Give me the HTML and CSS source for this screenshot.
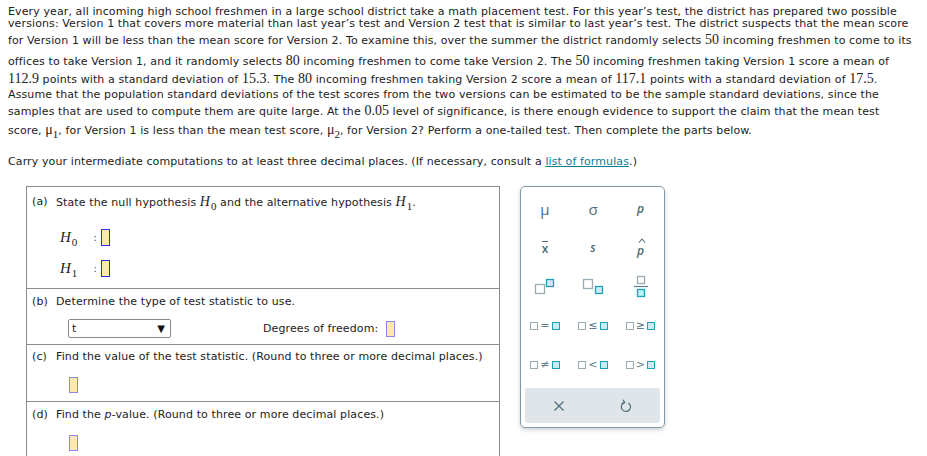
FILE: index.html
```html
<!DOCTYPE html>
<html>
<head>
<meta charset="utf-8">
<link rel="stylesheet" href="styles.css">
</head>
<body>
<div class="intro">
  <div class="ln">Every year, all incoming high school freshmen in a large school district take a math placement test. For this year’s test, the district has prepared two possible</div>
  <div class="ln g0">versions: Version 1 that covers more material than last year’s test and Version 2 test that is similar to last year’s test. The district suspects that the mean score</div>
  <div class="ln g4">for Version 1 will be less than the mean score for Version 2. To examine this, over the summer the district randomly selects <span class="m">50</span> incoming freshmen to come to its</div>
  <div class="ln g9">offices to take Version 1, and it randomly selects <span class="m">80</span> incoming freshmen to come take Version 2. The <span class="m">50</span> incoming freshmen taking Version 1 score a mean of</div>
  <div class="ln g6"><span class="m">112.9</span> points with a standard deviation of <span class="m">15.3</span>. The <span class="m">80</span> incoming freshmen taking Version 2 score a mean of <span class="m">117.1</span> points with a standard deviation of <span class="m">17.5</span>.</div>
  <div class="ln g4">Assume that the population standard deviations of the test scores from the two versions can be estimated to be the sample standard deviations, since the</div>
  <div class="ln g4">samples that are used to compute them are quite large. At the <span class="m">0.05</span> level of significance, is there enough evidence to support the claim that the mean test</div>
  <div class="ln g7">score, <span class="m">μ<sub>1</sub></span>, for Version 1 is less than the mean test score, <span class="m">μ<sub>2</sub></span>, for Version 2? Perform a one-tailed test. Then complete the parts below.</div>
  <div class="ln g20">Carry your intermediate computations to at least three decimal places. (If necessary, consult a <a class="link" href="#">list of formulas</a>.)</div>
</div>

<div class="work">
  <div class="panel">
    <div class="sec sec-a">
      <div class="q"><span class="lbl">(a)</span><span>State the null hypothesis <span class="hv">H<sub>0</sub></span> and the alternative hypothesis <span class="hv">H<sub>1</sub></span>.</span></div>
      <div class="hrow hrow0"><span class="hv big">H<sub>0</sub></span><span class="colon">:</span><span class="inp active"></span></div>
      <div class="hrow hrow1"><span class="hv big">H<sub>1</sub></span><span class="colon">:</span><span class="inp active"></span></div>
    </div>
    <div class="sec sec-b">
      <div class="q"><span class="lbl">(b)</span><span>Determine the type of test statistic to use.</span></div>
      <div class="brow">
        <div class="sel"><span>t</span><span class="arrow">▼</span></div>
        <span class="dof">Degrees of freedom:</span><span class="inp soft dofbox"></span>
      </div>
    </div>
    <div class="sec sec-c">
      <div class="q"><span class="lbl">(c)</span><span>Find the value of the test statistic. (Round to three or more decimal places.)</span></div>
      <div class="arow"><span class="inp soft"></span></div>
    </div>
    <div class="sec sec-d">
      <div class="q"><span class="lbl">(d)</span><span>Find the <i>p</i>-value. (Round to three or more decimal places.)</span></div>
      <div class="arow"><span class="inp soft"></span></div>
    </div>
  </div>

  <div class="palette">
    <div class="grid">
      <div class="cell"><span class="sym mu">μ</span></div>
      <div class="cell"><span class="sym sig">σ</span></div>
      <div class="cell"><span class="sym pi">p</span></div>
      <div class="cell"><span class="sym xbar">x</span></div>
      <div class="cell"><span class="sym si">s</span></div>
      <div class="cell"><span class="phat"><svg class="hat" width="8" height="5" viewBox="0 0 8 5"><path d="M1 4.5 L4 1 L7 4.5" stroke="#4d6d79" stroke-width="1.1" fill="none"/></svg><span class="sym pi">p</span></span></div>
      <div class="cell">
        <svg width="22" height="18" viewBox="0 0 22 18"><rect x="1.5" y="6.5" width="9" height="9" fill="#fff" stroke="#9aabb1" stroke-width="1.3"/><rect x="12.5" y="1.5" width="7" height="7" fill="#c6edf3" stroke="#1fa2b7" stroke-width="1.3"/></svg>
      </div>
      <div class="cell">
        <svg width="22" height="18" viewBox="0 0 22 18"><rect x="1.5" y="1.5" width="9" height="9" fill="#fff" stroke="#9aabb1" stroke-width="1.3"/><rect x="13.5" y="8.5" width="7" height="7" fill="#c6edf3" stroke="#1fa2b7" stroke-width="1.3"/></svg>
      </div>
      <div class="cell">
        <svg width="16" height="24" viewBox="0 0 16 24"><rect x="4.5" y="1.5" width="7" height="7" fill="#fff" stroke="#9aabb1" stroke-width="1.3"/><line x1="1" y1="11.5" x2="15" y2="11.5" stroke="#5f7f8a" stroke-width="1.2"/><rect x="4.5" y="14.5" width="7" height="7" fill="#c6edf3" stroke="#1fa2b7" stroke-width="1.3"/></svg>
      </div>
      <div class="cell"><span class="rel"><span class="bx"></span><span class="op">=</span><span class="bx t"></span></span></div>
      <div class="cell"><span class="rel"><span class="bx"></span><span class="op">≤</span><span class="bx t"></span></span></div>
      <div class="cell"><span class="rel"><span class="bx"></span><span class="op">≥</span><span class="bx t"></span></span></div>
      <div class="cell"><span class="rel"><span class="bx"></span><span class="op">≠</span><span class="bx t"></span></span></div>
      <div class="cell"><span class="rel"><span class="bx"></span><span class="op">&lt;</span><span class="bx t"></span></span></div>
      <div class="cell"><span class="rel"><span class="bx"></span><span class="op">&gt;</span><span class="bx t"></span></span></div>
    </div>
    <div class="actions">
      <div class="act">
        <svg width="12" height="12" viewBox="0 0 12 12"><path d="M1.5 1.5 L10.5 10.5 M10.5 1.5 L1.5 10.5" stroke="#4f6f7b" stroke-width="1.3" fill="none"/></svg>
      </div>
      <div class="act">
        <svg width="12" height="14" viewBox="0 0 12 14"><path d="M4.2 3.6 A4.6 4.6 0 1 0 8.3 3.9" stroke="#4f6f7b" stroke-width="1.2" fill="none"/><path d="M3.2 0.8 L4.6 3.7 L1.6 4.6" stroke="#4f6f7b" stroke-width="1.2" fill="none"/></svg>
      </div>
    </div>
  </div>
</div>
</body>
</html>
```

FILE: styles.css
```css
html, body {
  margin: 0;
  padding: 0;
  background: #fff;
}
body {
  padding: 6px 8px 0 8px;
  font-family: "DejaVu Sans", Verdana, sans-serif;
  font-size: 11px;
  letter-spacing: 0.11px;
  color: #222;
}
.intro .ln {
  height: 12px;
  line-height: 12px;
  white-space: nowrap;
}
.g0 { margin-top: 0; }
.g4 { margin-top: 4px; }
.g6 { margin-top: 6px; }
.g7 { margin-top: 7px; }
.g9 { margin-top: 9px; }
.g20 { margin-top: 20px; }
.m {
  font-family: "Liberation Serif", "Times New Roman", serif;
  font-size: 14px;
  line-height: 12px;
  letter-spacing: 0;
}
.m sub {
  font-size: 11px;
  line-height: 0;
  vertical-align: -4px;
}
.link {
  color: #0e7c98;
  text-decoration: underline;
}

.work {
  display: flex;
  align-items: flex-start;
  margin-top: 18px;
  margin-left: 18px;
}
.panel {
  width: 472px;
  border: 1px solid #8c8c8c;
  border-bottom: none;
  height: 300px;
}
.sec {
  border-top: 1px solid #8c8c8c;
  padding: 0 5px;
  box-sizing: border-box;
}
.sec:first-child { border-top: none; }
.sec-a { height: 101px; padding-top: 7px; }
.sec-b { height: 56px; padding-top: 5px; }
.sec-c { height: 57px; padding-top: 4px; }
.sec-d { height: 80px; padding-top: 5px; }
.q {
  display: flex;
  line-height: 16px;
  height: 16px;
  white-space: nowrap;
}
.lbl {
  width: 24px;
  flex: none;
}
.hv {
  font-family: "Liberation Serif", "Times New Roman", serif;
  font-style: italic;
  font-size: 14px;
  letter-spacing: 0;
}
.hv sub {
  font-style: normal;
  font-size: 11px;
  line-height: 0;
  vertical-align: -4px;
  margin-left: 1px;
}
.hv.big { font-size: 15px; }
.hrow {
  display: flex;
  align-items: center;
  height: 18px;
  padding-left: 28px;
}
.hrow0 { margin-top: 18px; }
.hrow1 { margin-top: 13px; }
.colon {
  margin-left: 16px;
  margin-right: 4px;
  color: #555;
}
.inp {
  display: inline-block;
  width: 7px;
  height: 15px;
  background: #ffe8ac;
  border: 1px solid #2d2df5;
}
.inp.soft {
  border-color: #8a8af2;
  width: 7px;
  height: 14px;
}
.brow {
  display: flex;
  align-items: center;
  margin-top: 9px;
  height: 19px;
  padding-left: 36px;
}
.sel {
  border: 1px solid #8a8a8a;
  border-radius: 2px;
  display: flex;
  align-items: center;
  justify-content: space-between;
  padding: 0 5px 0 3px;
  box-sizing: border-box;
  width: 103px;
  height: 19px;
}
.arrow {
  font-size: 10px;
  color: #111;
}
.dof {
  margin-left: 92px;
}
.dofbox {
  margin-left: 8px;
}
.arow {
  padding-left: 37px;
  margin-top: 12px;
  height: 16px;
}

.palette {
  margin-left: 20px;
  width: 143px;
  height: 238px;
  border: 1px solid #7f9aa3;
  border-radius: 5px;
  box-shadow: 0 2px 4px rgba(0, 0, 0, 0.18);
  padding: 2px 0 0 0;
  box-sizing: content-box;
}
.grid {
  display: grid;
  grid-template-columns: 48px 48px 47px;
  grid-auto-rows: 39px;
}
.cell {
  display: flex;
  align-items: center;
  justify-content: center;
}
.sym {
  font-family: "Open Sans", "DejaVu Sans", sans-serif;
  color: #4d6d79;
  font-size: 14px;
  letter-spacing: 0;
}
.mu { font-weight: 400; font-size: 15px; }
.sig { font-size: 15px; }
.pi { font-style: italic; font-weight: 600; font-size: 12px; }
.si { font-style: italic; font-weight: 600; font-size: 12px; }
.xbar {
  font-weight: 600;
  font-size: 12px;
  border-top: 1.3px solid #4d6d79;
  line-height: 11px;
  padding-top: 1px;
}
.phat {
  display: flex;
  flex-direction: column;
  align-items: center;
  margin-top: 2px;
}
.hat {
  display: block;
  margin-left: 2px;
  margin-bottom: -1px;
}
.rel {
  display: flex;
  align-items: center;
}
.bx {
  display: inline-block;
  width: 6px;
  height: 6px;
  border: 1.3px solid #9aabb1;
  background: #fff;
}
.bx.t {
  border-color: #1fa2b7;
  background: #c6edf3;
}
.op {
  font-family: "DejaVu Sans", sans-serif;
  font-size: 11px;
  color: #5d7d88;
  margin: 0 2px;
  line-height: 10px;
}
.actions {
  margin: 4px 4px 0 4px;
  height: 35px;
  background: #dfe5e8;
  border-radius: 3px;
  display: flex;
}
.act {
  flex: 1;
  display: flex;
  align-items: center;
  justify-content: center;
}
```
